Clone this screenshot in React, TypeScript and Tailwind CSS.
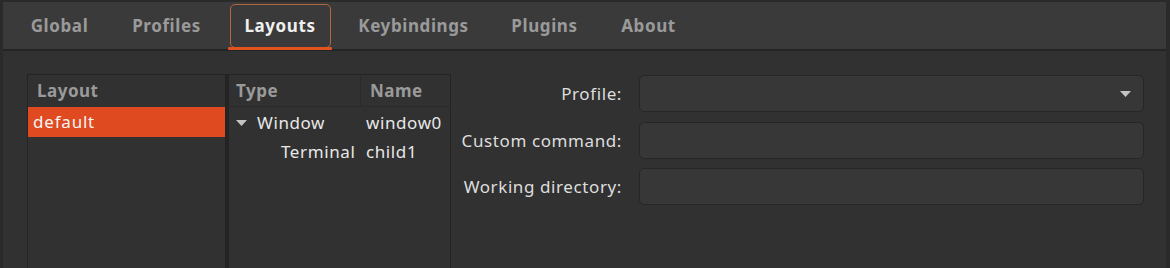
import React from "react";

const font = { fontFamily: '"Noto Sans", "Open Sans", sans-serif' };

const tabs = [
  { label: "Global", w: "w-[101px]" },
  { label: "Profiles", w: "w-[113px]" },
  { label: "Layouts", w: "w-[114px]", active: true },
  { label: "Keybindings", w: "w-[153px]" },
  { label: "Plugins", w: "w-[109px]" },
  { label: "About", w: "w-[99px]" },
];

function Tri({ className }: { className?: string }) {
  return (
    <svg width="11" height="6" viewBox="0 0 11 6" className={className}>
      <path d="M0 0 L11 0 L5.5 6 Z" fill="#c4c4c4" />
    </svg>
  );
}

export default function App() {
  return (
    <div
      className="w-[1170px] h-[268px] overflow-hidden bg-[#313131] border-t-[2px] border-l-[3px] border-r-[4px] border-[#2a2a2a] flex flex-col"
      style={font}
    >
      {/* Tab bar */}
      <div className="h-[49px] bg-[#3a3a3a] border-b-[2px] border-[#242424] flex items-stretch pl-[6px] shrink-0">
        {tabs.map((t) => (
          <div key={t.label} className={`${t.w} relative flex items-center justify-center`}>
            {t.active && (
              <>
                <div className="absolute left-[7px] right-[6px] top-[2px] bottom-[1px] rounded-[5px] border border-[#b0673f]" />
                <div className="absolute left-[5px] right-[5px] bottom-[-1px] h-[3px] bg-[#e2521d] rounded-[1px]" />
              </>
            )}
            <span
              className={`relative text-[17px] font-bold leading-none tracking-[0.6px] ${
                t.active ? "text-[#f0f0f0]" : "text-[#9a9a9a]"
              }`}
            >
              {t.label}
            </span>
          </div>
        ))}
      </div>

      {/* Content */}
      <div className="flex flex-1 pl-[24px] pt-[23px] pr-[22px]">
        {/* Layout list */}
        <div className="w-[199px] border border-[#242424] border-b-0 bg-[#313131] flex flex-col">
          <div className="h-[32px] flex items-center pl-[9px] text-[17px] font-bold tracking-[0.5px] text-[#9a9a9a]">Layout</div>
          <div className="h-[30px] bg-[#df4a21] flex items-center pl-[5px] text-[17px] tracking-[0.8px] text-[#f5f5f5]">default</div>
        </div>
        {/* Tree */}
        <div className="w-[225px] border-l-[3px] border-t border-r border-[#242424] bg-[#313131] flex flex-col">
          <div className="h-[32px] flex border-b border-[#2a2a2a] text-[17px] font-bold tracking-[0.5px] text-[#9a9a9a]">
            <div className="w-[132px] flex items-center pl-[7px] border-r border-[#2a2a2a]">Type</div>
            <div className="flex-1 flex items-center pl-[9px]">Name</div>
          </div>
          <div className="h-[31px] flex items-center text-[17px] tracking-[0.6px] text-[#e8e8e8]">
            <div className="w-[137px] flex items-center pl-[7px]">
              <Tri className="mr-[10px]" />
              <span>Window</span>
            </div>
            <span>window0</span>
          </div>
          <div className="h-[28px] flex items-center text-[17px] tracking-[0.6px] text-[#e8e8e8]">
            <div className="w-[137px] pl-[52px]">Terminal</div>
            <span>child1</span>
          </div>
        </div>
        {/* Form */}
        <div className="flex-1 flex flex-col">
          <div className="flex items-center h-[37px] mt-[1px]">
            <div className="w-[171px] text-right text-[17px] tracking-[0.6px] text-[#dedede]">Profile:</div>
            <div className="ml-[17px] flex-1 h-full rounded-[5px] border border-[#262626] bg-[#373737] flex items-center justify-end pr-[12px]">
              <Tri />
            </div>
          </div>
          <div className="flex items-center h-[37px] mt-[10px]">
            <div className="w-[171px] text-right text-[17px] tracking-[0.6px] text-[#dedede] whitespace-nowrap">Custom command:</div>
            <div className="ml-[17px] flex-1 h-full rounded-[5px] border border-[#262626] bg-[#373737]" />
          </div>
          <div className="flex items-center h-[37px] mt-[9px]">
            <div className="w-[171px] text-right text-[17px] tracking-[0.6px] text-[#dedede] whitespace-nowrap">Working directory:</div>
            <div className="ml-[17px] flex-1 h-full rounded-[5px] border border-[#262626] bg-[#373737]" />
          </div>
        </div>
      </div>
    </div>
  );
}
